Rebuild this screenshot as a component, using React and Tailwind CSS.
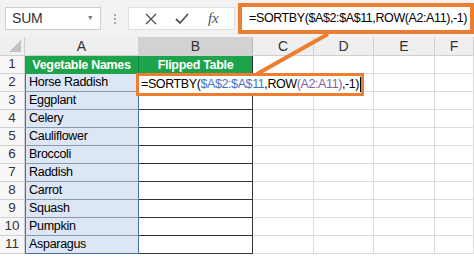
import React from "react";

const font = { fontFamily: "'Liberation Sans', Arial, sans-serif" };

const veggies = [
  "Horse Raddish",
  "Eggplant",
  "Celery",
  "Cauliflower",
  "Broccoli",
  "Raddish",
  "Carrot",
  "Squash",
  "Pumpkin",
  "Asparagus",
];

// the formula, split into coloured runs like Excel does
const Formula = () => (
  <>
    <span>=SORTBY(</span>
    <span className="text-[#4472c4]">$A$2:$A$11</span>
    <span>,ROW</span>
    <span className="text-[#8064a2]">(A2:A11)</span>
    <span>,-1)</span>
  </>
);

function Toolbar() {
  return (
    <div className="flex items-center h-[37px] bg-[#f2f2f2] pl-[5px]">
      <div className="w-[96px] h-[23px] bg-white border border-[#cfcfcf] flex items-center justify-between pl-[6px] pr-[6px]">
        <span className="text-[14px] tracking-[-0.2px] text-[#333]">SUM</span>
        <span className="text-[7px] text-[#777]">▼</span>
      </div>
      <div className="w-[28px] flex flex-col items-center gap-[2px]">
        <span className="w-[2px] h-[2px] bg-[#aaa]" />
        <span className="w-[2px] h-[2px] bg-[#aaa]" />
        <span className="w-[2px] h-[2px] bg-[#aaa]" />
      </div>
      <div className="w-[107px] h-[23px] bg-white border border-[#e0e0e0] flex items-center justify-around px-[6px]">
        <svg width="12" height="12" viewBox="0 0 12 12">
          <path d="M1 1 L11 11 M11 1 L1 11" stroke="#555" strokeWidth="1.4" />
        </svg>
        <svg width="14" height="12" viewBox="0 0 14 12">
          <path d="M1 6 L5 10 L13 1" stroke="#555" strokeWidth="1.8" fill="none" />
        </svg>
        <span className="text-[15px] italic text-[#555]" style={{ fontFamily: "'Liberation Serif', serif" }}>fx</span>
      </div>
      <div className="ml-[3px] w-[237px] h-[31px] border-[4px] border-[#ed7d31] bg-white flex items-center pl-[7px] text-[12.5px] tracking-[-0.4px] text-black whitespace-nowrap">
        <span>=SORTBY($A$2:$A$11,ROW(A2:A11),-1)</span>
      </div>
    </div>
  );
}

const cols = [
  { name: "C", w: "w-[61px]" },
  { name: "D", w: "w-[60px]" },
  { name: "E", w: "w-[61px]" },
  { name: "F", w: "w-[39px]" },
];

function Sheet() {
  return (
    <div className="flex flex-col">
      {/* column headers */}
      <div className="flex h-[19px] bg-[#efefef] border-b border-[#d0d0d0] text-[14px] text-[#333]">
        <div className="w-[25px] relative border-r border-[#d0d0d0]">
          <svg className="absolute right-[3px] bottom-[3px]" width="12" height="12" viewBox="0 0 12 12">
            <path d="M12 0 L12 12 L0 12 Z" fill="#c2c2c2" />
          </svg>
        </div>
        <div className="w-[114px] flex items-center justify-center border-r border-[#d0d0d0]">A</div>
        <div className="w-[114px] flex items-center justify-center bg-[#d2d2d2] border-r border-[#bdbdbd]">B</div>
        {cols.map((c) => (
          <div key={c.name} className={`${c.w} flex items-center justify-center border-r border-[#d0d0d0]`}>{c.name}</div>
        ))}
      </div>

      {/* row 1: headers of the table */}
      <div className="flex h-[18px] text-[12.5px] tracking-[-0.3px]">
        <div className="w-[25px] bg-[#f7f7f7] border-r border-b border-[#d0d0d0] flex items-center justify-center text-[13.5px] text-[#333] tracking-normal">1</div>
        <div className="w-[114px] bg-[#1da44b] border-r border-[#0e8a3c] flex items-center justify-center font-bold text-white whitespace-nowrap">Vegetable Names</div>
        <div className="w-[114px] bg-[#1da44b] border-r border-[#333] flex items-center justify-center font-bold text-white whitespace-nowrap">Flipped Table</div>
        {cols.map((c) => (
          <div key={c.name} className={`${c.w} border-r border-b border-[#dcdcdc]`} />
        ))}
      </div>

      {veggies.map((v, i) => (
        <div key={v} className="flex h-[18px] text-[12.5px]">
          <div className="w-[25px] bg-[#f7f7f7] border-r border-b border-[#d0d0d0] flex items-center justify-center text-[13.5px] text-[#333]">{i + 2}</div>
          <div className={`w-[114px] bg-[#dce6f4] border-l-[1.5px] border-r-[1.5px] border-[#4a6fa5] flex items-center pl-[3px] text-black tracking-[-0.3px] whitespace-nowrap ${i === veggies.length - 1 ? "border-b-[1.5px]" : "border-b border-b-[#8d99ab]"}`}>{v}</div>
          <div className="w-[114px] bg-white border-r border-b border-[#333]" />
          {cols.map((c) => (
            <div key={c.name} className={`${c.w} border-r border-b border-[#dcdcdc]`} />
          ))}
        </div>
      ))}
    </div>
  );
}

export default function App() {
  return (
    <div className="relative w-[474px] h-[260px] overflow-hidden bg-white" style={font}>
      <Toolbar />
      <Sheet />

      {/* formula being typed in B2, over the grid */}
      <div className="absolute left-[136px] top-[73px] w-[228px] h-[23px] border-[3px] border-[#ed7d31] bg-white flex items-center pl-[2px] text-[12.5px] tracking-[-0.4px] text-black whitespace-nowrap">
        <Formula />
        <span className="w-[1px] h-[15px] bg-black ml-[1px]" />
      </div>

      {/* callout line from the formula bar to the cell */}
      <svg className="absolute left-0 top-0 pointer-events-none" width="474" height="260">
        <line x1="328" y1="34" x2="257" y2="74" stroke="#ed7d31" strokeWidth="4" />
      </svg>
    </div>
  );
}
